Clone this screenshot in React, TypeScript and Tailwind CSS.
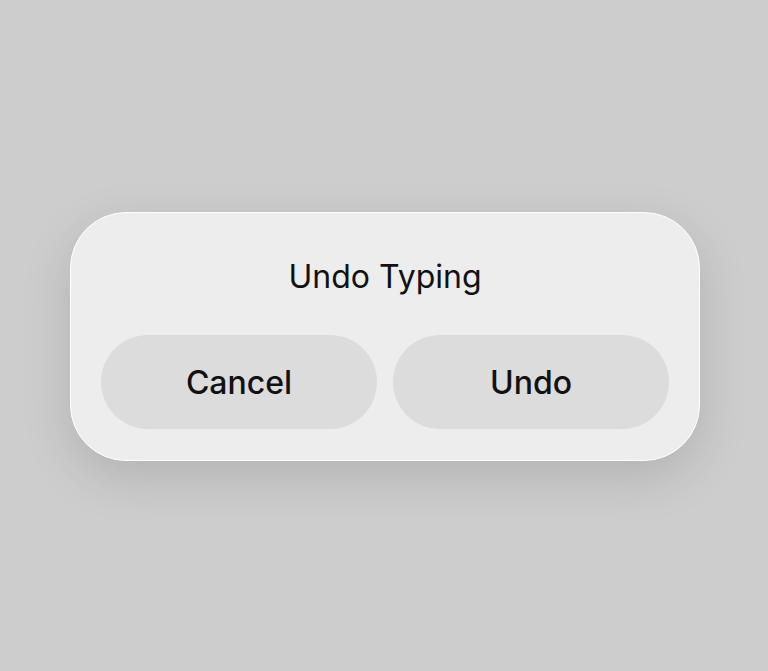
export default function App() {
  return (
    <div
      className="flex h-[671px] w-full items-center justify-center bg-[#cdcdcd]"
      style={{ fontFamily: "Inter, 'Noto Sans', sans-serif" }}
    >
      <div className="ml-[2px] mt-[2px] flex w-[630px] flex-col rounded-[56px] border border-white bg-[#ededed] px-[30px] pb-[31px] pt-[44px] shadow-[0_16px_50px_rgba(0,0,0,0.13)]">
        <h1 className="text-center text-[32px] leading-[40px] font-normal text-[#111]">Undo Typing</h1>
        <div className="mt-[38px] flex gap-4">
          <button className="h-[94px] flex-1 rounded-full bg-[#dcdcdc] pt-[2px] text-[32px] font-medium text-[#111]">
            Cancel
          </button>
          <button className="h-[94px] flex-1 rounded-full bg-[#dcdcdc] pt-[2px] text-[32px] font-medium text-[#111]">
            Undo
          </button>
        </div>
      </div>
    </div>
  );
}
